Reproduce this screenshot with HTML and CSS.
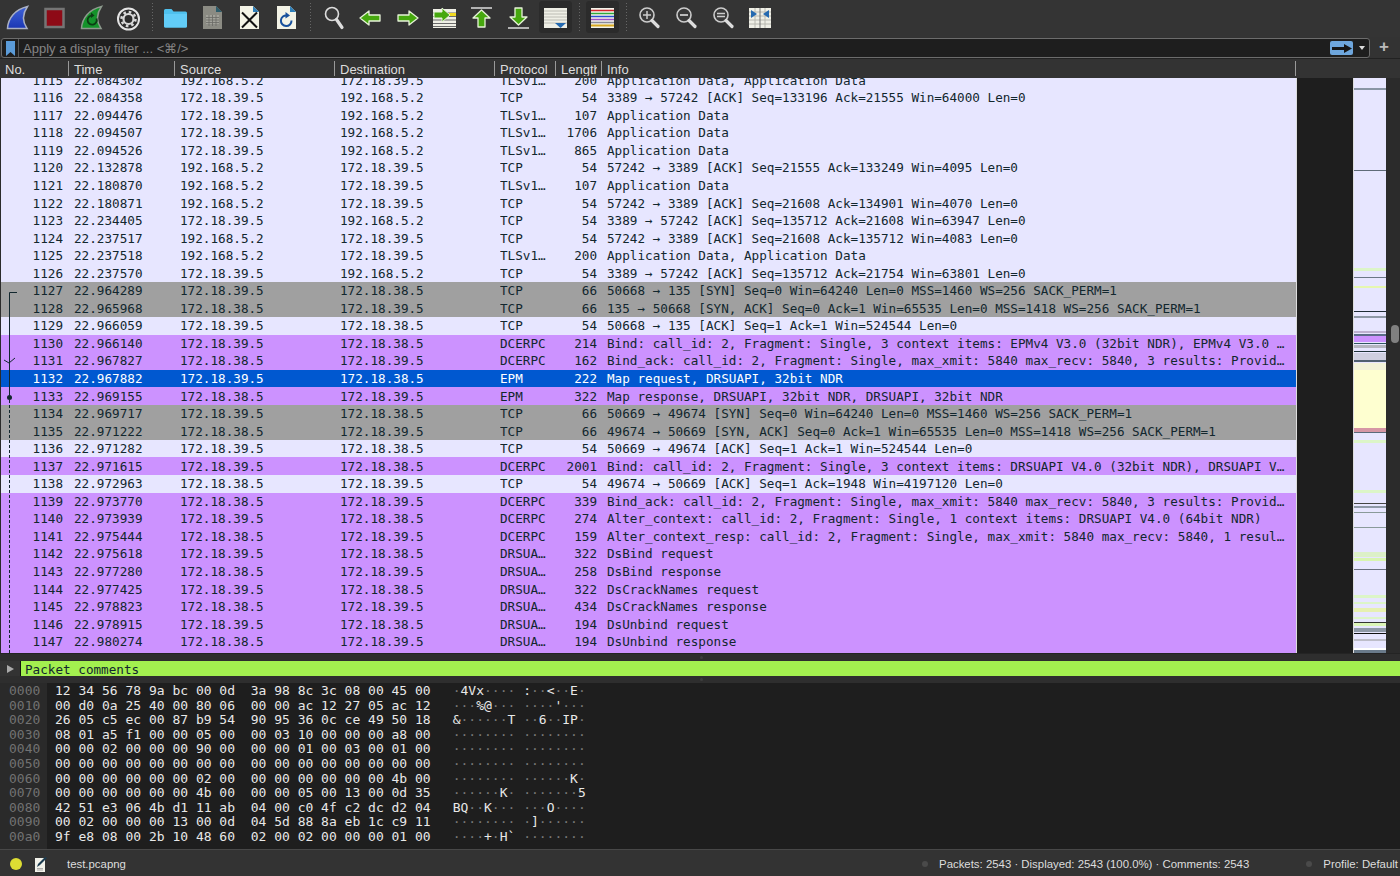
FILE: index.html
```html
<!DOCTYPE html>
<html lang="en">

<head>
    <meta charset="UTF-8" />
    <title>test.pcapng</title>
    <link rel="stylesheet" href="styles.css">
</head>

<body>
    <div class="toolbar">
        <svg class="tool" viewBox="0 0 25 24"><defs><linearGradient id="fin" x1="0" y1="0" x2="0" y2="1"><stop offset="0" stop-color="#3f63d8"/><stop offset="1" stop-color="#1b36b4"/></linearGradient></defs><path d="M2.5 22.5C3 12 10 3.500 22.500.5 18 7 17 15 22 22.500Z" fill="url(#fin)" stroke="#aab0c4" stroke-width="1.500"/></svg>
        <svg class="tool" viewBox="0 0 25 24"><rect x="3.500" y="3" width="18" height="18" fill="#8e0a16" stroke="#757575" stroke-width="2.500"/></svg>
        <svg class="tool" viewBox="0 0 25 24"><path d="M2.500 22.500C3 12 10 3.500 22.500.5 18 7 17 15 22 22.500Z" fill="#14932a" stroke="#8d9a8d" stroke-width="1.500"/><path d="M17.500 12.500a4.600 4.600 0 1 1-4-3" fill="none" stroke="#0c3d14" stroke-width="1.800"/><path d="M12 6.500l3.500 3-3.500 2.500z" fill="#0c3d14"/></svg>
        <svg class="tool" viewBox="0 0 25 24"><circle cx="12.500" cy="13" r="10.500" fill="#2c2c2c" stroke="#e4e4e4" stroke-width="2"/><circle cx="12.500" cy="13" r="5" fill="none" stroke="#d8d8d8" stroke-width="2.200"/><circle cx="12.500" cy="13" r="7" fill="none" stroke="#d8d8d8" stroke-width="2.500" stroke-dasharray="2.600 2.900"/></svg>
        <span class="sep"></span>
        <svg class="tool" viewBox="0 0 25 24"><path d="M1 4.500a1.500 1.500 0 0 1 1.500-1.500h6l2 2.500h12a1.500 1.500 0 0 1 1.500 1.500v13a1.500 1.500 0 0 1-1.500 1.500h-20A1.500 1.500 0 0 1 1 20Z" fill="#4fc1ee"/><path d="M1 8h23v12a1.500 1.500 0 0 1-1.500 1.500h-20A1.500 1.500 0 0 1 1 20Z" fill="#62cdf8"/></svg>
        <svg class="tool" viewBox="0 0 25 24"><path d="M3 0h13l6 6v17H3Z" fill="#8b8b83"/><path d="M16 0l6 6h-6Z" fill="#2d5c6b"/><path d="M6 9h13v11H6Z" fill="#a3a39b"/><path d="M6 11.500h13M6 14h13M6 16.500h13M6 19h13M9 9v11M12.500 9v11M16 9v11" stroke="#6a6a64" stroke-width=".8"/></svg>
        <svg class="tool" viewBox="0 0 25 24"><path d="M3 0h13l6 6v17H3Z" fill="#f3f3e6"/><path d="M16 0l6 6h-6Z" fill="#2f7fb8"/><path d="M5 6.500l15 15M20 6.500l-15 15" stroke="#111" stroke-width="2"/></svg>
        <svg class="tool" viewBox="0 0 25 24"><path d="M3 0h13l6 6v17H3Z" fill="#f3f3e6"/><path d="M16 0l6 6h-6Z" fill="#2f7fb8"/><path d="M17.500 14.500a5.300 5.300 0 1 1-4.500-5" fill="none" stroke="#17509c" stroke-width="2"/><path d="M11.500 6l4.500 3.500-4.500 3z" fill="#17509c"/></svg>
        <span class="sep"></span>
        <svg class="tool" viewBox="0 0 25 24"><circle cx="11" cy="8" r="6.500" fill="#3a3a3a" stroke="#ddd" stroke-width="1.600"/><path d="M15.500 13.500l5.500 8" stroke="#ddd" stroke-width="3.200" stroke-linecap="round"/></svg>
        <svg class="tool" viewBox="0 0 25 24"><path d="M2 12l9-7v4h11v6H11v4Z" fill="#46a80e" stroke="#e6f2d8" stroke-width="1.300" stroke-linejoin="round"/></svg>
        <svg class="tool" viewBox="0 0 25 24"><path d="M23 12l-9-7v4H3v6h11v4Z" fill="#46a80e" stroke="#e6f2d8" stroke-width="1.300" stroke-linejoin="round"/></svg>
        <svg class="tool" viewBox="0 0 25 24"><path d="M1 3h23v19H1Z" fill="#efefe6"/><path d="M1 7h23M1 10.500h23M1 14h23M1 17.500h23M1 20.500h23" stroke="#6a6a6a" stroke-width="1.200"/><path d="M17 7h7v3h-7Z" fill="#f0d820"/><path d="M18 9l-8-7v4H2v6h8v4Z" fill="#46a80e" stroke="#e6f2d8"/></svg>
        <svg class="tool" viewBox="0 0 25 24"><path d="M2 2h21" stroke="#ddd" stroke-width="1.500"/><path d="M12.500 4l8.500 8h-5v9H9v-9H4Z" fill="#46a80e" stroke="#e6f2d8" stroke-width="1.300" stroke-linejoin="round"/></svg>
        <svg class="tool" viewBox="0 0 25 24"><path d="M2 22h21" stroke="#ddd" stroke-width="1.500"/><path d="M12.500 19l8.500-8h-5V2H9v9H4Z" fill="#46a80e" stroke="#e6f2d8" stroke-width="1.300" stroke-linejoin="round"/></svg>
        <span class="tool-box"><svg class="tool" viewBox="0 0 25 24"><path d="M1 2h23v20H1Z" fill="#efefe6"/><path d="M1 5h23M1 8h23M1 11h23M1 14h23M1 17h23" stroke="#bcbcb4"/><path d="M12 17h11l-5.500 5Z" fill="#2469b0"/></svg></span>
        <span class="sep"></span>
        <span class="tool-box"><svg class="tool" viewBox="0 0 25 24"><path d="M1 2h23v20H1Z" fill="#f4f4ea"/><path d="M1 4.500h23" stroke="#d8222a" stroke-width="1.500"/><path d="M1 7.500h23" stroke="#32a83c" stroke-width="1.500"/><path d="M1 10.500h23" stroke="#2a4fd0" stroke-width="1.500"/><path d="M1 13.500h23" stroke="#a050c8" stroke-width="1.500"/><path d="M1 16.500h23" stroke="#8a8a9a" stroke-width="1.500"/><path d="M1 19.500h23" stroke="#d8a820" stroke-width="2"/></svg></span>
        <span class="sep"></span>
        <svg class="tool" viewBox="0 0 25 24"><circle cx="10" cy="9" r="7" fill="#3a3a3a" stroke="#ccc" stroke-width="1.600"/><path d="M6 9h8M10 5v8" stroke="#ccc" stroke-width="1.500"/><path d="M15 14.500l6 6" stroke="#ddd" stroke-width="3.200" stroke-linecap="round"/></svg>
        <svg class="tool" viewBox="0 0 25 24"><circle cx="10" cy="9" r="7" fill="#3a3a3a" stroke="#ccc" stroke-width="1.600"/><path d="M6 9h8" stroke="#ccc" stroke-width="1.800"/><path d="M15 14.500l6 6" stroke="#ddd" stroke-width="3.200" stroke-linecap="round"/></svg>
        <svg class="tool" viewBox="0 0 25 24"><circle cx="10" cy="9" r="7" fill="#3a3a3a" stroke="#ccc" stroke-width="1.600"/><path d="M6 7.500h8M6 10.500h8" stroke="#ccc" stroke-width="1.500"/><path d="M15 14.500l6 6" stroke="#ddd" stroke-width="3.200" stroke-linecap="round"/></svg>
        <svg class="tool" viewBox="0 0 25 24"><path d="M1 2h22v20H1Z" fill="#efefe6"/><path d="M1 6h22M1 10h22M1 14h22M1 18h22M7 2v20M17 2v20" stroke="#b8b8b0"/><path d="M12 2v20" stroke="#777"/><path d="M3 4l6 4-6 4ZM21 4l-6 4 6 4Z" fill="#2469b0"/></svg>
    </div>

    <div class="filter-row">
        <div class="filter">
            <span class="bookmark"><svg width="9" height="15" viewBox="0 0 9 15"><path d="M0 0h9v15L4.500 11 0 15Z" fill="#5b9bd8"/></svg></span>
            <span class="filter-text">Apply a display filter ... &lt;⌘/&gt;</span>
            <span class="apply"><svg width="20" height="9" viewBox="0 0 20 9"><path d="M0 3h12V0l8 4.500-8 4.500V6H0Z" fill="#161616"/></svg></span>
            <span class="caret"></span>
        </div>
        <span class="plus">+</span>
    </div>

    <div class="header">
        <span class="h-no">No.</span>
        <span class="h-time">Time</span>
        <span class="h-src">Source</span>
        <span class="h-dst">Destination</span>
        <span class="h-proto">Protocol</span>
        <span class="h-len">Length</span>
        <span class="h-info">Info</span>
    </div>

    <div class="main">
        <div class="list">
            <div class="rows">
                <div class="row"><span>1115</span><span>22.084302</span><span>192.168.5.2</span><span>172.18.39.5</span><span>TLSv1…</span><span>200</span><span>Application Data, Application Data</span></div>
                <div class="row"><span>1116</span><span>22.084358</span><span>172.18.39.5</span><span>192.168.5.2</span><span>TCP</span><span>54</span><span>3389 → 57242 [ACK] Seq=133196 Ack=21555 Win=64000 Len=0</span></div>
                <div class="row"><span>1117</span><span>22.094476</span><span>172.18.39.5</span><span>192.168.5.2</span><span>TLSv1…</span><span>107</span><span>Application Data</span></div>
                <div class="row"><span>1118</span><span>22.094507</span><span>172.18.39.5</span><span>192.168.5.2</span><span>TLSv1…</span><span>1706</span><span>Application Data</span></div>
                <div class="row"><span>1119</span><span>22.094526</span><span>172.18.39.5</span><span>192.168.5.2</span><span>TLSv1…</span><span>865</span><span>Application Data</span></div>
                <div class="row"><span>1120</span><span>22.132878</span><span>192.168.5.2</span><span>172.18.39.5</span><span>TCP</span><span>54</span><span>57242 → 3389 [ACK] Seq=21555 Ack=133249 Win=4095 Len=0</span></div>
                <div class="row"><span>1121</span><span>22.180870</span><span>192.168.5.2</span><span>172.18.39.5</span><span>TLSv1…</span><span>107</span><span>Application Data</span></div>
                <div class="row"><span>1122</span><span>22.180871</span><span>192.168.5.2</span><span>172.18.39.5</span><span>TCP</span><span>54</span><span>57242 → 3389 [ACK] Seq=21608 Ack=134901 Win=4070 Len=0</span></div>
                <div class="row"><span>1123</span><span>22.234405</span><span>172.18.39.5</span><span>192.168.5.2</span><span>TCP</span><span>54</span><span>3389 → 57242 [ACK] Seq=135712 Ack=21608 Win=63947 Len=0</span></div>
                <div class="row"><span>1124</span><span>22.237517</span><span>192.168.5.2</span><span>172.18.39.5</span><span>TCP</span><span>54</span><span>57242 → 3389 [ACK] Seq=21608 Ack=135712 Win=4083 Len=0</span></div>
                <div class="row"><span>1125</span><span>22.237518</span><span>192.168.5.2</span><span>172.18.39.5</span><span>TLSv1…</span><span>200</span><span>Application Data, Application Data</span></div>
                <div class="row"><span>1126</span><span>22.237570</span><span>172.18.39.5</span><span>192.168.5.2</span><span>TCP</span><span>54</span><span>3389 → 57242 [ACK] Seq=135712 Ack=21754 Win=63801 Len=0</span></div>
                <div class="row syn"><span>1127</span><span>22.964289</span><span>172.18.39.5</span><span>172.18.38.5</span><span>TCP</span><span>66</span><span>50668 → 135 [SYN] Seq=0 Win=64240 Len=0 MSS=1460 WS=256 SACK_PERM=1</span></div>
                <div class="row syn"><span>1128</span><span>22.965968</span><span>172.18.38.5</span><span>172.18.39.5</span><span>TCP</span><span>66</span><span>135 → 50668 [SYN, ACK] Seq=0 Ack=1 Win=65535 Len=0 MSS=1418 WS=256 SACK_PERM=1</span></div>
                <div class="row"><span>1129</span><span>22.966059</span><span>172.18.39.5</span><span>172.18.38.5</span><span>TCP</span><span>54</span><span>50668 → 135 [ACK] Seq=1 Ack=1 Win=524544 Len=0</span></div>
                <div class="row dce"><span>1130</span><span>22.966140</span><span>172.18.39.5</span><span>172.18.38.5</span><span>DCERPC</span><span>214</span><span>Bind: call_id: 2, Fragment: Single, 3 context items: EPMv4 V3.0 (32bit NDR), EPMv4 V3.0 …</span></div>
                <div class="row dce"><span>1131</span><span>22.967827</span><span>172.18.38.5</span><span>172.18.39.5</span><span>DCERPC</span><span>162</span><span>Bind_ack: call_id: 2, Fragment: Single, max_xmit: 5840 max_recv: 5840, 3 results: Provid…</span></div>
                <div class="row sel"><span>1132</span><span>22.967882</span><span>172.18.39.5</span><span>172.18.38.5</span><span>EPM</span><span>222</span><span>Map request, DRSUAPI, 32bit NDR</span></div>
                <div class="row dce"><span>1133</span><span>22.969155</span><span>172.18.38.5</span><span>172.18.39.5</span><span>EPM</span><span>322</span><span>Map response, DRSUAPI, 32bit NDR, DRSUAPI, 32bit NDR</span></div>
                <div class="row syn"><span>1134</span><span>22.969717</span><span>172.18.39.5</span><span>172.18.38.5</span><span>TCP</span><span>66</span><span>50669 → 49674 [SYN] Seq=0 Win=64240 Len=0 MSS=1460 WS=256 SACK_PERM=1</span></div>
                <div class="row syn"><span>1135</span><span>22.971222</span><span>172.18.38.5</span><span>172.18.39.5</span><span>TCP</span><span>66</span><span>49674 → 50669 [SYN, ACK] Seq=0 Ack=1 Win=65535 Len=0 MSS=1418 WS=256 SACK_PERM=1</span></div>
                <div class="row"><span>1136</span><span>22.971282</span><span>172.18.39.5</span><span>172.18.38.5</span><span>TCP</span><span>54</span><span>50669 → 49674 [ACK] Seq=1 Ack=1 Win=524544 Len=0</span></div>
                <div class="row dce"><span>1137</span><span>22.971615</span><span>172.18.39.5</span><span>172.18.38.5</span><span>DCERPC</span><span>2001</span><span>Bind: call_id: 2, Fragment: Single, 3 context items: DRSUAPI V4.0 (32bit NDR), DRSUAPI V…</span></div>
                <div class="row"><span>1138</span><span>22.972963</span><span>172.18.38.5</span><span>172.18.39.5</span><span>TCP</span><span>54</span><span>49674 → 50669 [ACK] Seq=1 Ack=1948 Win=4197120 Len=0</span></div>
                <div class="row dce"><span>1139</span><span>22.973770</span><span>172.18.38.5</span><span>172.18.39.5</span><span>DCERPC</span><span>339</span><span>Bind_ack: call_id: 2, Fragment: Single, max_xmit: 5840 max_recv: 5840, 3 results: Provid…</span></div>
                <div class="row dce"><span>1140</span><span>22.973939</span><span>172.18.39.5</span><span>172.18.38.5</span><span>DCERPC</span><span>274</span><span>Alter_context: call_id: 2, Fragment: Single, 1 context items: DRSUAPI V4.0 (64bit NDR)</span></div>
                <div class="row dce"><span>1141</span><span>22.975444</span><span>172.18.38.5</span><span>172.18.39.5</span><span>DCERPC</span><span>159</span><span>Alter_context_resp: call_id: 2, Fragment: Single, max_xmit: 5840 max_recv: 5840, 1 resul…</span></div>
                <div class="row dce"><span>1142</span><span>22.975618</span><span>172.18.39.5</span><span>172.18.38.5</span><span>DRSUA…</span><span>322</span><span>DsBind request</span></div>
                <div class="row dce"><span>1143</span><span>22.977280</span><span>172.18.38.5</span><span>172.18.39.5</span><span>DRSUA…</span><span>258</span><span>DsBind response</span></div>
                <div class="row dce"><span>1144</span><span>22.977425</span><span>172.18.39.5</span><span>172.18.38.5</span><span>DRSUA…</span><span>322</span><span>DsCrackNames request</span></div>
                <div class="row dce"><span>1145</span><span>22.978823</span><span>172.18.38.5</span><span>172.18.39.5</span><span>DRSUA…</span><span>434</span><span>DsCrackNames response</span></div>
                <div class="row dce"><span>1146</span><span>22.978915</span><span>172.18.39.5</span><span>172.18.38.5</span><span>DRSUA…</span><span>194</span><span>DsUnbind request</span></div>
                <div class="row dce"><span>1147</span><span>22.980274</span><span>172.18.38.5</span><span>172.18.39.5</span><span>DRSUA…</span><span>194</span><span>DsUnbind response</span></div>
            </div>
            <!-- related packets line, y is relative to the top of the list -->
            <svg class="related" width="20" height="575" viewBox="0 0 20 575">
                <path d="M17 214.500H9.500V319" fill="none" stroke="#12272e"/>
                <path d="M4 282l5 3 6-5" fill="none" stroke="#12272e"/>
                <circle cx="9.500" cy="319.500" r="2.500" fill="#12272e"/>
                <path d="M9.500 322V575" fill="none" stroke="#12272e" stroke-dasharray="3 2"/>
            </svg>
        </div>
        <div class="gutter"></div>
        <svg class="minimap" width="32" height="575" viewBox="0 0 32 575">
            <rect width="32" height="575" fill="#e7e6ff"/>
            <rect y="10" width="32" height="2" fill="#8995a5"/>
            <rect y="92" width="32" height="1" fill="#5f6b78"/>
            <rect y="190" width="32" height="3" fill="#dcf5c8"/>
            <rect y="199" width="32" height="1" fill="#6b7785"/>
            <rect y="208" width="32" height="2" fill="#e6f7b0"/>
            <rect y="233" width="32" height="1" fill="#1f2c35"/>
            <rect y="238" width="32" height="2" fill="#8e98a6"/>
            <rect y="253" width="32" height="2" fill="#bdb0d0"/>
            <rect y="256" width="32" height="2" fill="#5b6c88"/>
            <rect y="258" width="32" height="6" fill="#cc92ff"/>
            <rect y="265" width="32" height="1" fill="#2f5560"/>
            <rect y="267" width="32" height="3" fill="#b5b5c0"/>
            <rect y="273" width="32" height="1" fill="#1f3338"/>
            <rect y="275" width="32" height="7" fill="#cfcfe0"/>
            <rect y="282" width="32" height="2" fill="#4f5f70"/>
            <rect y="285" width="32" height="7" fill="#f2f3d8"/>
            <rect y="292" width="32" height="58" fill="#feffd0"/>
            <rect y="350" width="32" height="4" fill="#d697a5"/>
            <rect y="354" width="32" height="1" fill="#5a6a7a"/>
            <rect y="362" width="32" height="3" fill="#dcf5c8"/>
            <rect y="412" width="32" height="3" fill="#dcf5c8"/>
            <rect y="425" width="32" height="1" fill="#444444"/>
            <rect y="428" width="32" height="2" fill="#8e98a6"/>
            <rect y="434" width="32" height="1" fill="#8a9a9a"/>
            <rect y="449" width="32" height="1" fill="#8a9a9a"/>
            <rect y="474" width="32" height="5" fill="#dcf0c8"/>
            <rect y="480" width="32" height="3" fill="#d8f5b0"/>
            <rect y="491" width="32" height="1" fill="#6a7080"/>
            <rect y="517" width="32" height="3" fill="#dcf5c8"/>
            <rect y="524" width="32" height="2" fill="#dcf5c8"/>
            <rect y="530" width="32" height="4" fill="#e6f0b0"/>
            <rect y="539" width="32" height="2" fill="#dcf5c8"/>
            <rect y="544" width="32" height="1" fill="#333333"/>
            <rect y="545" width="32" height="3" fill="#dcf5b8"/>
            <rect y="550" width="32" height="4" fill="#8e98a6"/>
            <rect y="555" width="32" height="1" fill="#111111"/>
            <rect y="561" width="32" height="2" fill="#bcbcc8"/>
            <rect y="570" width="32" height="2" fill="#ffffff"/>
            <rect y="572" width="32" height="3" fill="#6a7a8a"/>
        </svg>
        <div class="scrollbar"><span class="thumb"></span></div>
    </div>

    <div class="splitter"><span class="grip"></span></div>

    <div class="comments">
        <span class="arrow-cell"><span class="arrow"></span></span>
        <span class="comment-text">Packet comments</span>
    </div>

    <div class="splitter small"><span class="grip"></span></div>

    <div class="bytes">
        <pre class="offsets">0000
0010
0020
0030
0040
0050
0060
0070
0080
0090
00a0</pre>
        <pre class="hex">12 34 56 78 9a bc 00 0d  3a 98 8c 3c 08 00 45 00
00 d0 0a 25 40 00 80 06  00 00 ac 12 27 05 ac 12
26 05 c5 ec 00 87 b9 54  90 95 36 0c ce 49 50 18
08 01 a5 f1 00 00 05 00  00 03 10 00 00 00 a8 00
00 00 02 00 00 00 90 00  00 00 01 00 03 00 01 00
00 00 00 00 00 00 00 00  00 00 00 00 00 00 00 00
00 00 00 00 00 00 02 00  00 00 00 00 00 00 4b 00
00 00 00 00 00 00 4b 00  00 00 05 00 13 00 0d 35
42 51 e3 06 4b d1 11 ab  04 00 c0 4f c2 dc d2 04
00 02 00 00 00 13 00 0d  04 5d 88 8a eb 1c c9 11
9f e8 08 00 2b 10 48 60  02 00 02 00 00 00 01 00</pre>
        <pre class="ascii">·<b>4Vx</b>···· <b>:</b>··<b>&lt;</b>··<b>E</b>·
···<b>%@</b>··· ····<b>'</b>···
<b>&amp;</b>······<b>T</b> ··<b>6</b>··<b>IP</b>·
········ ········
········ ········
········ ········
········ ······<b>K</b>·
······<b>K</b>· ·······<b>5</b>
<b>BQ</b>··<b>K</b>··· ···<b>O</b>····
········ ·<b>]</b>······
····<b>+</b>·<b>H`</b> ········</pre>
    </div>

    <div class="status">
        <span class="led"></span>
        <svg class="note" width="13" height="15" viewBox="0 0 13 15"><path d="M1 1h10v14H1Z" fill="#f2f2ea"/><path d="M3 10l1-3 7-7 2 1-7 7Z" fill="#1c3c50"/><path d="M3 11.500h6M3 13h6" stroke="#9a9a9a" stroke-width=".8"/></svg>
        <span class="file">test.pcapng</span>
        <span class="dot"></span>
        <span class="counts">Packets: 2543 · Displayed: 2543 (100.0%) · Comments: 2543</span>
        <span class="dot second"></span>
        <span class="profile">Profile: Default</span>
    </div>
</body>

</html>
```

FILE: styles.css
```css
body {
    margin: 0;
    height: 876px;
    width: 1400px;
    overflow: hidden;
    display: flex;
    flex-direction: column;
    background: #333;
    font-family: 'Liberation Sans', Arial, sans-serif;
    color: #ddd;
}

pre {
    margin: 0;
    font: inherit;
}

/* Toolbar */
.toolbar {
    height: 37px;
    flex: none;
    display: flex;
    align-items: flex-start;
    gap: 12px;
    padding: 6px 0 0 5px;
    box-sizing: border-box;
    background: #343434;
}

.tool {
    width: 25px;
    height: 24px;
    flex: none;
    overflow: visible;
    display: block;
}

.tool-box {
    flex: none;
    width: 25px;
    height: 24px;
    position: relative;
}

.tool-box::before {
    content: "";
    position: absolute;
    inset: -5px -4px -3px -4px;
    background: #2b2b2b;
    border-radius: 3px;
}

.tool-box .tool {
    position: relative;
}

.sep {
    flex: none;
    width: 1px;
    height: 30px;
    margin: -3px -1.5px 0;
    background-image: linear-gradient(#666 50%, transparent 50%);
    background-size: 1px 3px;
}

/* Filter */
.filter-row {
    height: 22px;
    flex: none;
    display: flex;
    align-items: flex-start;
    padding: 1px 0 0 1px;
    box-sizing: border-box;
    border-bottom: 1px solid #222;
}

.filter {
    width: 1369px;
    height: 20px;
    box-sizing: border-box;
    display: flex;
    align-items: center;
    background: #1e1e1e;
    border: 1px solid #6c6c6c;
    border-radius: 3px;
}

.bookmark {
    width: 16px;
    height: 100%;
    display: flex;
    align-items: center;
    justify-content: center;
    border-right: 1px solid #555;
}

.filter-text {
    flex: 1;
    margin-left: 4px;
    font-size: 13px;
    color: #858585;
}

.apply {
    width: 23px;
    height: 14px;
    display: flex;
    align-items: center;
    justify-content: center;
    background: #6ea6dc;
    border-radius: 2px;
}

.caret {
    width: 0;
    height: 0;
    margin: 0 4px 0 6px;
    border-left: 3.5px solid transparent;
    border-right: 3.5px solid transparent;
    border-top: 4px solid #ddd;
}

.plus {
    margin-left: 9px;
    font-size: 17px;
    line-height: 17px;
    font-weight: bold;
    color: #bbb;
}

/* Column header */
.header {
    height: 19px;
    flex: none;
    display: grid;
    grid-template-columns: 69px 106px 160px 160px 61px 41px 699px;
    align-items: start;
    font-size: 13px;
    line-height: 17px;
    background: #333;
    box-sizing: border-box;
    padding-top: 2px;
}

.header span {
    height: 15px;
    padding-left: 5px;
    border-right: 1px solid #999;
    box-sizing: border-box;
    overflow: hidden;
    white-space: nowrap;
}

.header .h-len {
    border-right: none;
}

.header .h-info {
    margin-left: 4px;
    border-left: 1px solid #999;
}

/* Packet list */
.main {
    height: 575px;
    flex: none;
    display: flex;
    background: #1e1e1e;
}

.list {
    width: 1295px;
    position: relative;
    overflow: hidden;
    flex: none;
    background: #cc92ff;
    border-left: 1px solid #2b2b2b;
    border-right: 1px solid #ddd;
}

.rows {
    margin-top: -6.600px;
}

.row {
    height: 17.550px;
    display: grid;
    grid-template-columns: 62px 117px 160px 160px 60px 37px 699px;
    align-items: center;
    background: #e7e6ff;
    color: #12272e;
    font-family: 'DejaVu Sans Mono', monospace;
    font-size: 12.650px;
    line-height: 17px;
    white-space: pre;
}

.row span {
    overflow: hidden;
}

.row span:nth-child(1),
.row span:nth-child(6) {
    text-align: right;
}

.row span:nth-child(2),
.row span:nth-child(7) {
    padding-left: 10px;
    box-sizing: border-box;
}

.row span:nth-child(2) {
    padding-left: 11px;
}

.row.syn {
    background: #a0a0a0;
}

.row.dce {
    background: #cc92ff;
}

.row.sel {
    background: #0058d0;
    color: #fff;
}

.related {
    position: absolute;
    left: -1px;
    top: 0;
}

.gutter {
    width: 57px;
    flex: none;
    border-right: 1px solid #ddd;
    box-sizing: border-box;
}

.minimap {
    flex: none;
    display: block;
}

.scrollbar {
    flex: 1;
    background: #2b2b2b;
    position: relative;
}

.thumb {
    position: absolute;
    left: 5px;
    top: 247px;
    width: 8px;
    height: 18px;
    border-radius: 4px;
    background: #808080;
}

/* Splitters */
.splitter {
    height: 8px;
    flex: none;
    display: flex;
    justify-content: center;
    align-items: center;
    background: #2e2e2e;
    border-top: 1px solid #242424;
    box-sizing: border-box;
}

.splitter.small {
    height: 7px;
    border-top: none;
}

.grip {
    width: 3px;
    height: 3px;
    border-radius: 50%;
    background: #3e3e3e;
    margin-left: 2px;
}

/* Packet comments */
.comments {
    height: 15px;
    flex: none;
    display: flex;
}

.arrow-cell {
    width: 20px;
    display: flex;
    align-items: center;
    justify-content: center;
    background: #333;
}

.arrow {
    width: 0;
    height: 0;
    border-top: 4px solid transparent;
    border-bottom: 4px solid transparent;
    border-left: 7px solid #aaa;
}

.comment-text {
    flex: 1;
    padding-left: 4px;
    background: #a3f04f;
    border-left: 1px solid #111;
    color: #12272e;
    font-family: 'DejaVu Sans Mono', monospace;
    font-size: 12.650px;
    line-height: 17px;
    white-space: pre;
}

/* Bytes pane */
.bytes {
    height: 167px;
    flex: none;
    display: flex;
    padding: 0;
    background: #1e1e1e;
    font-family: 'DejaVu Sans Mono', monospace;
    font-size: 13px;
    line-height: 14.600px;
    border-bottom: 1px solid #484848;
    box-sizing: border-box;
}

.offsets {
    width: 47px;
    box-sizing: border-box;
    padding: 1px 0 0 9px;
    background: #2a2a2a;
    color: #727272;
}

.hex {
    margin-left: 8px;
    padding-top: 1px;
    color: #e8e8e8;
}

.ascii {
    margin-left: 22px;
    padding-top: 1px;
    color: #777;
}

.ascii b {
    font-weight: normal;
    color: #e8e8e8;
}

/* Status bar */
.status {
    flex: 1;
    display: flex;
    align-items: center;
    font-size: 11.400px;
    padding-top: 2px;
    background: #333;
    white-space: nowrap;
}

.led {
    width: 12px;
    height: 12px;
    margin-left: 10px;
    border-radius: 50%;
    background: #dddd33;
}

.note {
    margin-left: 12px;
}

.file {
    margin-left: 20px;
    flex: 1;
}

.dot {
    width: 6px;
    height: 6px;
    border-radius: 50%;
    background: #4a4a4a;
}

.counts {
    margin-left: 11px;
}

.dot.second {
    margin-left: 57px;
}

.profile {
    margin-left: 11px;
    margin-right: 2px;
}
```
